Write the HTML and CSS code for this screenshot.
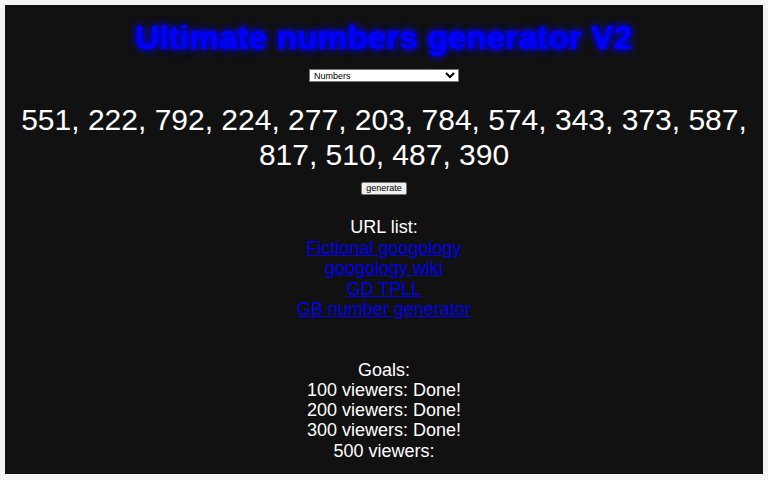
FILE: index.html
```html
<!DOCTYPE html>
<html>
<head>
<meta charset="utf-8">
<link rel="stylesheet" href="styles.css">
</head>
<body>
<div class="page">
  <h1 class="title">Ultimate numbers generator V2</h1>
  <div class="picker">
    <select class="mode">
      <option>Numbers</option>
    </select>
  </div>
  <p class="numbers">551, 222, 792, 224, 277, 203, 784, 574, 343, 373, 587, 817, 510, 487, 390</p>
  <div class="actions"><button class="gen">generate</button></div>
  <div class="urls">
    <div>URL list:</div>
    <div><a href="#">Fictional googology</a></div>
    <div><a href="#">googology wiki</a></div>
    <div><a href="#">GD TPLL</a></div>
    <div><a href="#">GB number generator</a></div>
  </div>
  <div class="goals">
    <div>Goals:</div>
    <div>100 viewers: Done!</div>
    <div>200 viewers: Done!</div>
    <div>300 viewers: Done!</div>
    <div>500 viewers:</div>
  </div>
</div>
</body>
</html>
```
FILE: styles.css
```css
html, body {
  margin: 0;
  padding: 0;
}
body {
  background: #f4f4f4;
  padding: 5px;
  height: 480px;
  box-sizing: border-box;
  font-family: "Liberation Sans", Arial, sans-serif;
}
.page {
  background: #111111;
  color: #ffffff;
  text-align: center;
  height: 469px;
  padding-top: 14px;
  box-sizing: border-box;
  overflow: hidden;
}
.title {
  margin: 0;
  font-size: 33.5px;
  font-weight: bold;
  color: #0000ff;
  text-shadow: 0 0 6px #0000ff, 0 0 10px #0000ff;
  line-height: 38px;
}
.picker {
  margin-top: 12px;
  line-height: 0;
}
.mode {
  width: 150px;
  height: 13px;
  font-size: 9px;
  font-family: "Liberation Sans", Arial, sans-serif;
  padding: 0;
  margin: 0;
  border: 1px solid #767676;
  border-radius: 0;
  background: #ffffff;
  color: #000;
  vertical-align: top;
}
.numbers {
  margin: 20px 0 0;
  font-size: 30px;
  line-height: 35px;
}
.actions {
  margin-top: 10px;
  line-height: 0;
}
.gen {
  font-family: "Liberation Sans", Arial, sans-serif;
  font-size: 9px;
  height: 13px;
  padding: 0 4px;
  line-height: 11px;
  border: 1px solid #767676;
  border-radius: 2px;
  background: #efefef;
  color: #000;
  vertical-align: top;
}
.urls {
  margin-top: 22px;
  font-size: 18px;
  line-height: 20.5px;
}
.urls a {
  color: #0000ee;
}
.goals {
  margin-top: 40px;
  font-size: 18px;
  line-height: 20.3px;
}
```
